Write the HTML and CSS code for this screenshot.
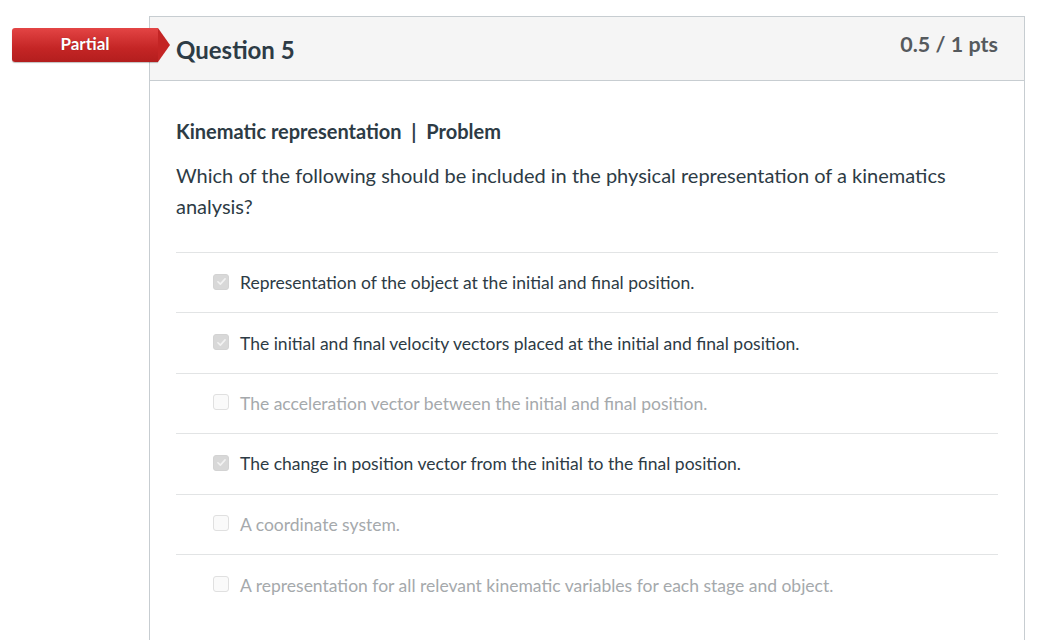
FILE: index.html
```html
<!DOCTYPE html>
<html>
<head>
<meta charset="utf-8">
<link rel="stylesheet" href="styles.css">
</head>
<body>
<div class="page">
  <div class="ribbon"><span>Partial</span></div>
  <div class="question">
    <div class="q-header">
      <h2 class="q-title">Question 5</h2>
      <div class="q-pts">0.5 / 1 pts</div>
    </div>
    <div class="q-body">
      <div class="q-topic">Kinematic representation &nbsp;|&nbsp; Problem</div>
      <p class="q-text">Which of the following should be included in the physical representation of a kinematics analysis?</p>
      <div class="answers">
        <div class="answer selected"><span class="box checked"><svg viewBox="0 0 16 16" width="16" height="16"><path d="M3.6 8.3 L6.6 11.2 L12.4 4.8" fill="none" stroke="#f2f2f2" stroke-width="2" stroke-linecap="round" stroke-linejoin="round"/></svg></span><span class="label">Representation of the object at the initial and final position.</span></div>
        <div class="answer selected"><span class="box checked"><svg viewBox="0 0 16 16" width="16" height="16"><path d="M3.6 8.3 L6.6 11.2 L12.4 4.8" fill="none" stroke="#f2f2f2" stroke-width="2" stroke-linecap="round" stroke-linejoin="round"/></svg></span><span class="label">The initial and final velocity vectors placed at the initial and final position.</span></div>
        <div class="answer"><span class="box"></span><span class="label">The acceleration vector between the initial and final position.</span></div>
        <div class="answer selected"><span class="box checked"><svg viewBox="0 0 16 16" width="16" height="16"><path d="M3.6 8.3 L6.6 11.2 L12.4 4.8" fill="none" stroke="#f2f2f2" stroke-width="2" stroke-linecap="round" stroke-linejoin="round"/></svg></span><span class="label">The change in position vector from the initial to the final position.</span></div>
        <div class="answer"><span class="box"></span><span class="label">A coordinate system.</span></div>
        <div class="answer"><span class="box"></span><span class="label">A representation for all relevant kinematic variables for each stage and object.</span></div>
      </div>
    </div>
  </div>
</div>
</body>
</html>
```
FILE: styles.css
```css
html, body {
  margin: 0;
  padding: 0;
  background: #fff;
}
body {
  font-family: Lato, "Open Sans", "Liberation Sans", sans-serif;
  color: #2d3b45;
}
.page {
  position: relative;
  padding: 16px 14px 0 149px;
}
.ribbon {
  position: absolute;
  left: 12px;
  top: 28px;
  width: 146px;
  height: 34px;
  background: linear-gradient(#e34444, #c42525 60%, #b31e1e);
  border-radius: 3px 0 0 3px;
  box-shadow: 0 1px 1px rgba(0,0,0,0.25);
  display: flex;
  align-items: center;
}
.ribbon::after {
  content: "";
  position: absolute;
  right: -12px;
  top: 0;
  border-top: 17px solid transparent;
  border-bottom: 17px solid transparent;
  border-left: 12px solid #c42525;
}
.ribbon span {
  width: 146px;
  text-align: center;
  color: #fff;
  font-weight: bold;
  font-size: 17px;
  margin-top: -4px;
  text-shadow: 0 0 1px rgba(0,0,0,0.3);
}
.question {
  width: 874px;
  border: 1px solid #c7cdd1;
  border-bottom: none;
  min-height: 640px;
}
.q-header {
  background: #f5f5f5;
  border-bottom: 1px solid #c7cdd1;
  height: 63px;
  padding: 0 26px;
  display: flex;
  justify-content: space-between;
}
.q-title {
  margin: 0;
  padding-top: 18px;
  font-size: 24px;
  font-weight: bold;
  line-height: 30px;
}
.q-pts {
  padding-top: 13px;
  font-size: 21.5px;
  font-weight: bold;
  color: #555a5e;
  line-height: 28px;
}
.q-body {
  padding: 36px 26px 0;
}
.q-topic {
  font-size: 20px;
  font-weight: bold;
  line-height: 28px;
}
.q-text {
  margin: 15px 0 30px;
  font-size: 20px;
  line-height: 31px;
}
.answers {
  border-top: 1px solid #e2e4e5;
}
.answer {
  box-sizing: border-box;
  height: 60.4px;
  border-bottom: 1px solid #e2e4e5;
  display: flex;
  align-items: center;
  padding-left: 37px;
  font-size: 17.5px;
  color: #a5a9ac;
}
.answer.selected {
  color: #2d3b45;
}
.answer:last-child {
  border-bottom: none;
}
.box {
  width: 14px;
  height: 14px;
  border: 1px solid #e0e0e0;
  border-radius: 3px;
  background: #fafafa;
  margin-right: 11px;
  margin-top: -2px;
  display: flex;
  align-items: center;
  justify-content: center;
  flex: none;
}
.box.checked {
  background: #d8d8d8;
  border-color: #d3d3d3;
}
.box svg {
  width: 13px;
  height: 13px;
}
.label {
  margin-top: 0;
}
```
